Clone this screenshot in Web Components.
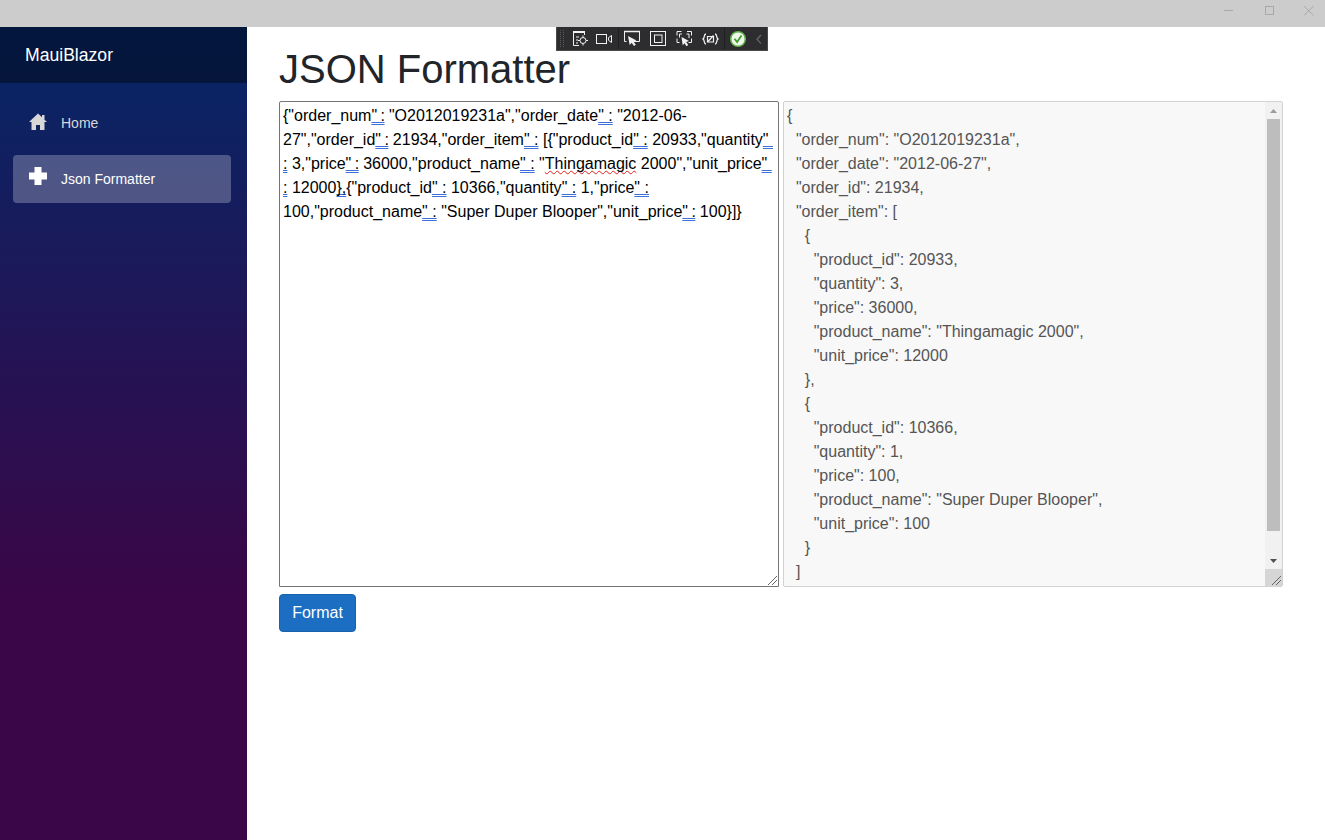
<!DOCTYPE html>
<html><head><meta charset="utf-8">
<style>
html,body{margin:0;padding:0;height:100%;overflow:hidden;background:#fff}
body{font-family:"Liberation Sans",Arial,sans-serif;}
</style></head><body>
<app-window>
  <vs-toolbar slot="overlay"></vs-toolbar>
  <side-nav slot="side"></side-nav>
  <formatter-page></formatter-page>
</app-window>
<script>
function el(name,html){
  customElements.define(name,class extends HTMLElement{
    constructor(){super();this.attachShadow({mode:'open'}).innerHTML=html;}
  });
}
el('app-window',`<style>
:host{display:flex;flex-direction:column;height:840px;position:relative}
.bar{height:27px;background:#ccc;display:flex;justify-content:flex-end;flex:none}
.bar svg{width:40px;height:20px;display:block}
.bar svg:last-child{margin-right:-5px}
.main{flex:1;display:flex;min-height:0}
.content{flex:1;min-width:0}
</style>
<div class="bar">
 <svg viewBox="0 0 40 20"><path d="M14 10.500h9" stroke="#a8a8a8" fill="none"/></svg>
 <svg viewBox="0 0 40 20"><rect x="15.500" y="6.500" width="8" height="8" stroke="#a8a8a8" fill="none"/></svg>
 <svg viewBox="0 0 40 20"><path d="M14 6l9.500 9.500M23.500 6L14 15.500" stroke="#a8a8a8" fill="none"/></svg>
</div>
<div class="main"><slot name="side"></slot><div class="content"><slot></slot></div></div>
<slot name="overlay"></slot>`);

el('vs-toolbar',`<style>
:host{position:absolute;left:556px;top:27px;width:212px;height:24px;box-sizing:border-box;background:#2d2d30;border:1px solid #4a4a4a;border-top:0;display:block}
svg{display:block}
</style>
<svg width="210" height="23" viewBox="0 0 210 23" fill="none" stroke="#f1f1f1" stroke-width="1">
 <path d="M3 3h1M6 3h1M3 5h1M6 5h1M3 7h1M6 7h1M3 9h1M6 9h1M3 11h1M6 11h1M3 13h1M6 13h1M3 15h1M6 15h1M3 17h1M6 17h1M3 19h1M6 19h1" stroke="#5a5a5e" transform="translate(0,.5)"/>
 <path d="M61.500 1v21M167.500 1v21" stroke="#1f1f21"/>
 <!-- document with target -->
 <path d="M16 5h12" stroke-width="2"/>
 <path d="M16.500 5v13.500H22M27.500 5v3"/>
 <path d="M19 10h3M19 13h2M19 16h2"/>
 <circle cx="26" cy="13.500" r="3"/>
 <path d="M26 8.500v2M26 16.500v2M21 13.500h2M29 13.500h2"/>
 <!-- camera -->
 <rect x="39.500" y="7.500" width="10" height="9"/><path d="M54.500 8.500v7l-3-2.200v-2.600z"/>
 <!-- inspect -->
 <path d="M69.500 14.500h-2V4.500H82.500V14.500H76" stroke-width="1"/>
 <path d="M67 4.500h16" stroke-width="1.500"/>
 <path d="M71 9l8.500 4.500-3 1 2.300 3.200-1.800 1.300-2.300-3.200-2 2.300z" fill="#f1f1f1" stroke="none"/>
 <!-- element box -->
 <rect x="93.500" y="4.500" width="15" height="14"/><rect x="97.500" y="8" width="7.500" height="7.500"/>
 <!-- select -->
 <path d="M120 8.500V4.500H124.500M130 4.500H134.500V8.500M134.500 11.500V15.500H131.500M122.500 15.500H120V11.500"/>
 <path d="M122.500 10.500V7H125M129.500 7H132V11"/>
 <path d="M124.500 10l7.500 4-2.800 1 2 3-1.700 1.200-2-3-1.800 2z" fill="#f1f1f1" stroke="none"/>
 <!-- hot reload -->
 <path d="M149 7c-2.500 0-1 4-3 5 2 1 .5 5 3 5M158 7c2.500 0 1 4 3 5-2 1-.5 5-3 5" stroke-width="1.300"/>
 <path d="M150.500 9.500h6v5.500h-6z" stroke-width="1.200"/>
 <path d="M150.500 15l6-6.500" stroke-width="1.300"/>
 <!-- check -->
 <circle cx="181" cy="12" r="7.300" fill="#eef6ea" stroke="#5fb34a" stroke-width="1.500"/>
 <path d="M177.500 11.800l2.600 3.200 4.400-6.500" stroke="#3f9a2a" stroke-width="1.800"/>
 <path d="M204 8l-4 4.300 4 4.300" stroke="#66666a" stroke-width="1.300"/>
</svg>`);

el('side-nav',`<style>
:host{display:block;width:247px;flex:none;background:linear-gradient(180deg,#052767 0%,#3a0647 70%);font-family:"Liberation Sans",Arial,sans-serif}
.top{height:56px;background:rgba(0,0,0,.4);display:flex;align-items:center;padding-left:25px;color:#fff;font-size:17.6px}
nav{padding:16px 16px 0 13px;display:flex;flex-direction:column;gap:8px}
a{display:flex;align-items:center;height:48px;border-radius:4px;padding-left:16px;font-size:14px;color:#d7d7d7;text-decoration:none}
a.on{background:rgba(255,255,255,.25);color:#fff}
svg{width:18px;height:18px;margin-right:14px;flex:none;position:relative;top:-1px}
a.on svg{top:-3px}
</style>
<div class="top">MauiBlazor</div>
<nav>
 <a href="#"><svg viewBox="0 0 18 18"><path fill="#d7d7d7" d="M9 .5L0 9h2.500v8H7v-5h4v5h4.500V9H18l-2.500-2.300V2h-2.500v2.300z"/></svg>Home</a>
 <a class="on" href="#"><svg viewBox="0 0 18 18"><path fill="#fff" d="M5.500 0h7v5.500H18v7h-5.500V18h-7v-5.500H0v-7h5.500z"/></svg>Json Formatter</a>
</nav>`);

el('json-input',`<style>
:host{display:block;box-sizing:border-box;width:500px;height:486px;border:1px solid #767676;border-radius:2px 2px 0 0;font-size:16px;line-height:24px;color:#000;padding:2px 3px 0;position:relative;background:#fff;overflow:hidden}
.l{display:block;white-space:pre}
u{text-decoration:underline double #3c6fd8 1px;text-underline-offset:1px;text-decoration-skip-ink:none}
u.a{letter-spacing:-.5px}
s{text-decoration:underline wavy #e0201c 1px;text-underline-offset:1px;text-decoration-skip-ink:none}
svg{position:absolute;right:1px;bottom:1px}
</style>
<span class="l">{"order_num<u class="a">" :</u> "O2012019231a","order_date<u>" :</u> "2012-06-</span>
<span class="l">27","order_id<u class="a">" :</u> 21934,"order_item<u>" :</u> [{"product_id<u>" :</u> 20933,"quantity<u>" </u></span>
<span class="l"><u>:</u> 3,"price<u class="a">" :</u> 36000,"product_name<u>" :</u> "<s>Thingamagic</s> 2000","unit_price<u>" </u></span>
<span class="l"><u>:</u> 12000<u>},</u>{"product_id<u>" :</u> 10366,"quantity<u>" :</u> 1,"price<u>" :</u></span>
<span class="l">100,"product_name<u>" :</u> "Super Duper Blooper","unit_price<u class="a">" :</u> 100}]}</span>
<svg width="9" height="9" viewBox="0 0 9 9"><path d="M0 9L9 0M4 9l5-5" stroke="#666" fill="none"/></svg>`);

el('json-output',`<style>
:host{display:flex;box-sizing:border-box;width:500px;height:486px;border:1px solid #d2d2d2;border-radius:2px;background:#f8f8f8;color:#555;font-size:16px;line-height:24px;overflow:hidden}
pre{margin:0;flex:1;min-width:0;overflow:hidden;padding:2px 3px 0;font:inherit;line-height:24px;height:482px}
.sb{width:17px;flex:none;display:flex;flex-direction:column;background:#f1f1f1}
.btn{height:17px;display:flex;align-items:center;justify-content:center}
.track{flex:1;padding:0 2px 0 2px;display:flex;flex-direction:column}
.thumb{height:412px;background:#bdbdbd}
.corner{height:17px;background:#d6d6d6;position:relative}
.corner svg{position:absolute;right:1px;bottom:1px}
.btn svg{display:block}
</style>
<pre>{
  "order_num": "O2012019231a",
  "order_date": "2012-06-27",
  "order_id": 21934,
  "order_item": [
    {
      "product_id": 20933,
      "quantity": 3,
      "price": 36000,
      "product_name": "Thingamagic 2000",
      "unit_price": 12000
    },
    {
      "product_id": 10366,
      "quantity": 1,
      "price": 100,
      "product_name": "Super Duper Blooper",
      "unit_price": 100
    }
  ]</pre>
<div class="sb">
 <div class="btn"><svg width="7" height="4" viewBox="0 0 7 4"><path d="M3.500 0L7 4H0z" fill="#9a9a9a"/></svg></div>
 <div class="track"><div class="thumb"></div></div>
 <div class="btn"><svg width="7" height="4" viewBox="0 0 7 4"><path d="M3.500 4L7 0H0z" fill="#505050"/></svg></div>
 <div class="corner"><svg width="9" height="9" viewBox="0 0 9 9"><path d="M0 9L9 0M4 9l5-5" stroke="#666" fill="none"/></svg></div>
</div>`);

el('format-button',`<style>
:host{display:inline-block}
button{box-sizing:border-box;height:38px;width:77px;padding:0;background:#1b6ec2;border:1px solid #1861ac;border-radius:4px;color:#fff;font:16px "Liberation Sans",Arial,sans-serif;display:block}
</style><button><slot></slot></button>`);

el('formatter-page',`<style>
:host{display:block;padding:0 32px;color:#212529;font-family:"Liberation Sans",Arial,sans-serif}
h1{font-size:40px;font-weight:400;line-height:48px;margin:0;padding-top:18px;height:56px;box-sizing:content-box}
.row{display:flex;gap:4px;width:1004px}
.act{margin-top:7px}
</style>
<h1>JSON Formatter</h1>
<div class="row"><json-input></json-input><json-output></json-output></div>
<div class="act"><format-button>Format</format-button></div>`);
</script>
</body></html>
